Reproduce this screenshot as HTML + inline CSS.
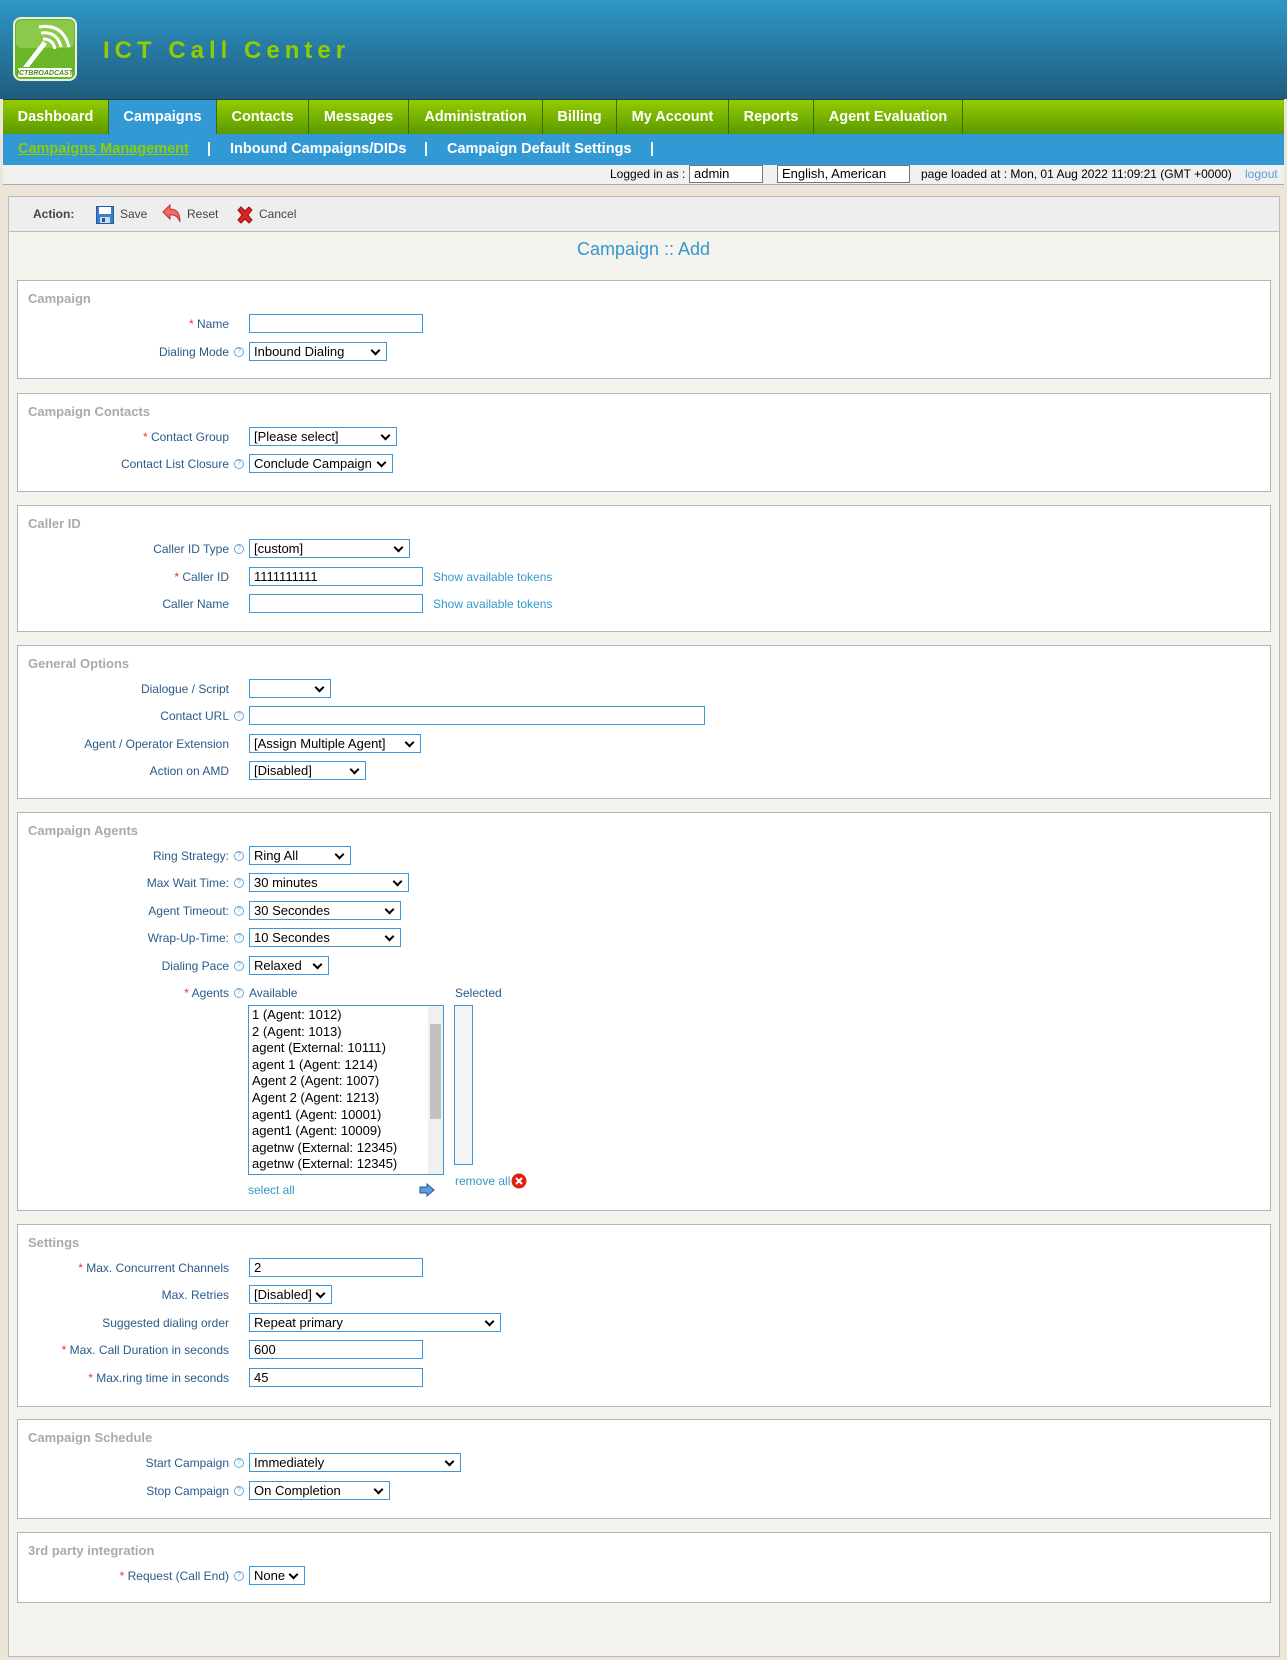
<!DOCTYPE html>
<html><head><meta charset="utf-8"><style>
*{box-sizing:border-box;margin:0;padding:0}
body{width:1287px;height:1660px;background:#ede6d8;font-family:"Liberation Sans",Arial,sans-serif;position:relative;overflow:hidden}
.a{position:absolute}
#hdr{left:0;top:0;width:1287px;height:99px;background:linear-gradient(#2f96c8,#1f5c7c)}
#nav{left:3px;top:99px;width:1281px;height:35px;background:linear-gradient(#94cb00,#5c9a00);border-top:1px solid #1b3f55}
.ni{position:absolute;top:0;height:34px;line-height:34px;color:#fff;font-weight:bold;font-size:14.5px;text-align:center;border-right:1px solid #3f6b10}
#sub{left:3px;top:134px;width:1281px;height:31px;background:#3399d5;color:#fff;font-weight:bold;font-size:14.5px;line-height:31px}
#info{left:3px;top:165px;width:1281px;height:20px;background:#f0f0f0;border-bottom:1px solid #aaa;font-size:12px;line-height:19px;color:#000}
#panel{left:8px;top:196px;width:1272px;height:1461px;background:#f5f3ee;border:1px solid #bbb}
#act{left:9px;top:197px;width:1270px;height:35px;background:#eee;border-bottom:1px solid #bbb;font-size:12px;color:#444;line-height:35px}
.fs{position:absolute;left:17px;width:1254px;background:#fff;border:1px solid #b5b5b5}
.lg{position:absolute;left:10px;top:10px;color:#aaa;font-weight:bold;font-size:13px}
.l{position:absolute;left:0;width:211px;text-align:right;font-size:12px;color:#2a5b8a;line-height:20px}
.l b{color:#e33;font-weight:normal}
.h{position:absolute;left:216px;top:5px;width:10px;height:10px;border:1px solid #6aa8d8;border-radius:50%;font-size:7px;line-height:8px;text-align:center;color:#6aa8d8}
.i{position:absolute;left:231px;height:19px;border:1px solid #3a98d8;background:#fff;font-size:13px;line-height:17px;padding-left:4px;color:#000}
.s{position:absolute;left:231px;height:19px;border:1px solid #3a98d8;background:#fff;font-size:13px;line-height:17px;padding-left:4px;color:#000;white-space:nowrap;overflow:hidden}
.s:after{content:"";position:absolute;right:7px;top:4px;width:5px;height:5px;border-right:2px solid #000;border-bottom:2px solid #000;transform:rotate(45deg)}
.lk{position:absolute;left:415px;font-size:12px;color:#3399cc;line-height:20px}
.r{position:absolute;left:0;width:1250px;height:19px}
</style></head><body>
<div id="hdr" class="a">
 <svg class="a" style="left:13px;top:17px" width="64" height="64" viewBox="0 0 64 64"><rect x="1" y="1" width="62" height="62" rx="7" fill="#6ab82a" stroke="#e8f2d8" stroke-width="2"/><rect x="3" y="3" width="58" height="28" rx="6" fill="#8cc94a"/><path d="M10 50 L30 24 L34 27 L16 50Z" fill="#fff"/><path d="M28 16 Q44 14 48 30 M26 10 Q50 6 56 30 M30 22 Q40 22 42 32" stroke="#fff" stroke-width="3" fill="none"/><rect x="5" y="51" width="54" height="9" rx="2" fill="#fff"/><text x="32" y="58" font-size="7" font-style="italic" font-weight="bold" text-anchor="middle" fill="#4a8a1a" font-family="Liberation Sans">ICTBROADCAST</text></svg>
 <div class="a" style="left:103px;top:37px;font-size:24px;font-weight:bold;letter-spacing:5px;color:#8fcc00">ICT Call Center</div>
</div>
<div id="nav" class="a">
 <div class="ni" style="left:0;width:106px">Dashboard</div>
 <div class="ni" style="left:106px;width:108px;background:#3399d5;height:35px">Campaigns</div>
 <div class="ni" style="left:214px;width:92px">Contacts</div>
 <div class="ni" style="left:306px;width:100px">Messages</div>
 <div class="ni" style="left:406px;width:134px">Administration</div>
 <div class="ni" style="left:540px;width:74px">Billing</div>
 <div class="ni" style="left:614px;width:112px">My Account</div>
 <div class="ni" style="left:726px;width:85px">Reports</div>
 <div class="ni" style="left:811px;width:149px">Agent Evaluation</div>
</div>
<div id="sub" class="a"><span class="a" style="left:15px;color:#8fcc00;text-decoration:underline">Campaigns Management </span><span class="a" style="left:204px">|</span><span class="a" style="left:227px">Inbound Campaigns/DIDs</span><span class="a" style="left:421px">|</span><span class="a" style="left:444px">Campaign Default Settings</span><span class="a" style="left:647px">|</span></div>
<div id="info" class="a">
 <span class="a" style="left:607px">Logged in as :</span>
 <span class="a" style="left:686px;top:0;width:74px;height:18px;border:1px solid #777;background:#fff;padding-left:4px;font-size:13px;line-height:16px">admin</span>
 <span class="a" style="left:774px;top:0;width:133px;height:18px;border:1px solid #777;background:#fff;padding-left:4px;font-size:13px;line-height:16px">English, American</span>
 <span class="a" style="left:918px">page loaded at : Mon, 01 Aug 2022 11:09:21 (GMT +0000)</span>
 <span class="a" style="left:1242px;color:#5aa0d0">logout</span>
</div>
<div id="panel" class="a"></div>
<div id="act" class="a">
 <b class="a" style="left:24px;color:#444">Action:</b>
 <svg class="a" style="left:87px;top:9px" width="18" height="18"><rect x="0.5" y="0.5" width="17" height="17" fill="#3b7fd0" stroke="#245a9a"/><rect x="3" y="1" width="12" height="7" fill="#fff"/><rect x="4" y="11" width="10" height="6" fill="#cde"/><rect x="6" y="12" width="3" height="4" fill="#245a9a"/></svg>
 <span class="a" style="left:111px">Save</span>
 <svg class="a" style="left:152px;top:7px" width="22" height="20"><path d="M2 8 L9 1 L9 5 Q19 5 19 18 Q16 10 9 11 L9 15Z" fill="#f06a6a" stroke="#b33" stroke-width="1"/></svg>
 <span class="a" style="left:178px">Reset</span>
 <svg class="a" style="left:226px;top:8px" width="20" height="20"><path d="M3 5 L6 2 L10 6 L14 2 L17 5 L13 10 L17 15 L14 18 L10 14 L6 18 L3 15 L7 10Z" fill="#d22" stroke="#911"/></svg>
 <span class="a" style="left:250px">Cancel</span>
</div>
<div class="a" style="left:0;width:1287px;top:239px;text-align:center;font-size:18px;color:#3399cc">Campaign :: Add</div>

<div class="fs" style="top:280px;height:99px"><div class="lg">Campaign</div>
 <div class="r" style="top:33px"><div class="l"><b>*</b> Name</div><div class="i" style="width:174px"></div></div>
 <div class="r" style="top:61px"><div class="l">Dialing Mode</div><div class="h">?</div><div class="s" style="width:138px">Inbound Dialing</div></div>
</div>
<div class="fs" style="top:393px;height:99px"><div class="lg">Campaign Contacts</div>
 <div class="r" style="top:33px"><div class="l"><b>*</b> Contact Group</div><div class="s" style="width:148px">[Please select]</div></div>
 <div class="r" style="top:60px"><div class="l">Contact List Closure</div><div class="h">?</div><div class="s" style="width:144px">Conclude Campaign</div></div>
</div>
<div class="fs" style="top:505px;height:127px"><div class="lg">Caller ID</div>
 <div class="r" style="top:33px"><div class="l">Caller ID Type</div><div class="h">?</div><div class="s" style="width:161px">[custom]</div></div>
 <div class="r" style="top:61px"><div class="l"><b>*</b> Caller ID</div><div class="i" style="width:174px">1111111111</div><div class="lk">Show available tokens</div></div>
 <div class="r" style="top:88px"><div class="l">Caller Name</div><div class="i" style="width:174px"></div><div class="lk">Show available tokens</div></div>
</div>
<div class="fs" style="top:645px;height:154px"><div class="lg">General Options</div>
 <div class="r" style="top:33px"><div class="l">Dialogue / Script</div><div class="s" style="width:82px"></div></div>
 <div class="r" style="top:60px"><div class="l">Contact URL</div><div class="h">?</div><div class="i" style="width:456px"></div></div>
 <div class="r" style="top:88px"><div class="l">Agent / Operator Extension</div><div class="s" style="width:172px">[Assign Multiple Agent]</div></div>
 <div class="r" style="top:115px"><div class="l">Action on AMD</div><div class="s" style="width:117px">[Disabled]</div></div>
</div>
<div class="fs" style="top:812px;height:399px"><div class="lg">Campaign Agents</div>
 <div class="r" style="top:33px"><div class="l">Ring Strategy:</div><div class="h">?</div><div class="s" style="width:102px">Ring All</div></div>
 <div class="r" style="top:60px"><div class="l">Max Wait Time:</div><div class="h">?</div><div class="s" style="width:160px">30 minutes</div></div>
 <div class="r" style="top:88px"><div class="l">Agent Timeout:</div><div class="h">?</div><div class="s" style="width:152px">30 Secondes</div></div>
 <div class="r" style="top:115px"><div class="l">Wrap-Up-Time:</div><div class="h">?</div><div class="s" style="width:152px">10 Secondes</div></div>
 <div class="r" style="top:143px"><div class="l">Dialing Pace</div><div class="h">?</div><div class="s" style="width:80px">Relaxed</div></div>
 <div class="r" style="top:170px"><div class="l"><b>*</b> Agents</div><div class="h">?</div><div class="l" style="left:231px;text-align:left">Available</div><div class="l" style="left:437px;text-align:left">Selected</div></div>
 <div class="a" style="left:230px;top:192px;width:196px;height:170px;border:1px solid #3a98d8;background:#fff;font-size:13px;line-height:16.6px;padding:1px 0 0 3px;color:#000">1 (Agent: 1012)<br>2 (Agent: 1013)<br>agent (External: 10111)<br>agent 1 (Agent: 1214)<br>Agent 2 (Agent: 1007)<br>Agent 2 (Agent: 1213)<br>agent1 (Agent: 10001)<br>agent1 (Agent: 10009)<br>agetnw (External: 12345)<br>agetnw (External: 12345)
  <div class="a" style="right:0;top:0;width:15px;height:168px;background:#f0f0f0"><div class="a" style="left:2px;top:18px;width:11px;height:95px;background:#c1c1c1"></div></div></div>
 <div class="a" style="left:436px;top:192px;width:19px;height:160px;border:1px solid #3a98d8;background:#f4f4f4"></div>
 <div class="a" style="left:230px;top:370px;font-size:12px;color:#3399cc">select all</div>
 <svg class="a" style="left:401px;top:370px" width="16" height="14"><path d="M1 4 H8 V1 L15 7 L8 13 V10 H1Z" fill="#5aa0e0" stroke="#2a4fa0"/></svg>
 <div class="a" style="left:437px;top:361px;font-size:12px;color:#3399cc">remove all</div>
 <svg class="a" style="left:493px;top:360px" width="16" height="16"><circle cx="8" cy="8" r="7.5" fill="#d21"/><path d="M5 5 L11 11 M11 5 L5 11" stroke="#fff" stroke-width="2"/></svg>
</div>
<div class="fs" style="top:1224px;height:183px"><div class="lg">Settings</div>
 <div class="r" style="top:33px"><div class="l"><b>*</b> Max. Concurrent Channels</div><div class="i" style="width:174px">2</div></div>
 <div class="r" style="top:60px"><div class="l">Max. Retries</div><div class="s" style="width:83px">[Disabled]</div></div>
 <div class="r" style="top:88px"><div class="l">Suggested dialing order</div><div class="s" style="width:252px">Repeat primary</div></div>
 <div class="r" style="top:115px"><div class="l"><b>*</b> Max. Call Duration in seconds</div><div class="i" style="width:174px">600</div></div>
 <div class="r" style="top:143px"><div class="l"><b>*</b> Max.ring time in seconds</div><div class="i" style="width:174px">45</div></div>
</div>
<div class="fs" style="top:1419px;height:100px"><div class="lg">Campaign Schedule</div>
 <div class="r" style="top:33px"><div class="l">Start Campaign</div><div class="h">?</div><div class="s" style="width:212px">Immediately</div></div>
 <div class="r" style="top:61px"><div class="l">Stop Campaign</div><div class="h">?</div><div class="s" style="width:141px">On Completion</div></div>
</div>
<div class="fs" style="top:1532px;height:71px"><div class="lg">3rd party integration</div>
 <div class="r" style="top:33px"><div class="l"><b>*</b> Request (Call End)</div><div class="h">?</div><div class="s" style="width:56px">None</div></div>
</div>
</body></html>
